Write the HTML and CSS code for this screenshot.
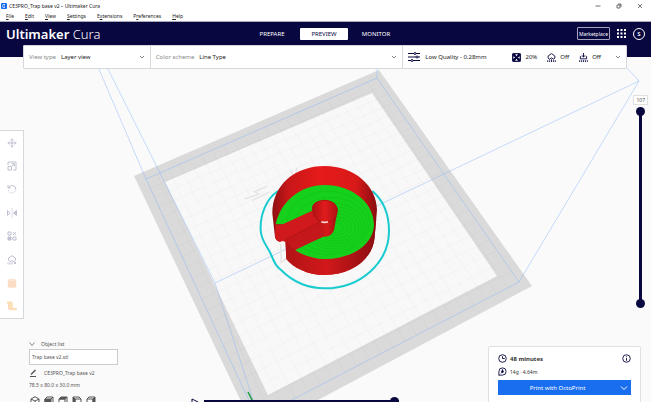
FILE: index.html
```html
<!DOCTYPE html>
<html lang="en">
<head>
<meta charset="utf-8">
<title>CE3PRO_Trap base v2 – Ultimaker Cura</title>
<link rel="stylesheet" href="styles.css">
</head>
<body>
<div class="titlebar">
  <svg class="app-icon" viewBox="0 0 12 12"><rect width="12" height="12" rx="2" fill="#196ef0"/><path d="M8 3H5Q3.500 3 3.500 4.500V7.500Q3.500 9 5 9H8M6 6h2" fill="none" stroke="#fff" stroke-width="1.500"/></svg>
  <span class="window-title">CE3PRO_Trap base v2 – Ultimaker Cura</span>
  <div class="window-controls">
    <button aria-label="Minimize"><svg viewBox="0 0 6 6"><path d="M.5 3h5"/></svg></button>
    <button aria-label="Restore"><svg viewBox="0 0 6 6"><path d="M1 2h3v3H1zM2 1h3v3"/></svg></button>
    <button aria-label="Close"><svg viewBox="0 0 6 6"><path d="M1 1l4 4M5 1L1 5"/></svg></button>
  </div>
</div>
<nav class="menubar">
  <button><u>F</u>ile</button><button><u>E</u>dit</button><button><u>V</u>iew</button><button><u>S</u>ettings</button><button>E<u>x</u>tensions</button><button>P<u>r</u>eferences</button><button><u>H</u>elp</button>
</nav>
<header class="header">
  <div class="logo"><b>Ultimaker</b> Cura</div>
  <nav class="stages">
    <button>PREPARE</button><button class="active">PREVIEW</button><button>MONITOR</button>
  </nav>
  <div class="account">
    <button class="marketplace">Marketplace</button>
    <button aria-label="Applications"><svg class="apps" viewBox="0 0 9 9"><path d="M0 0h2v2H0zM3.500 0h2v2h-2zM7 0h2v2H7zM0 3.500h2v2H0zM3.500 3.500h2v2h-2zM7 3.500h2v2H7zM0 7h2v2H0zM3.500 7h2v2h-2zM7 7h2v2H7z" fill="#fff"/></svg></button>
    <button class="avatar">S</button>
  </div>
</header>
<main class="stage">
  <svg class="scene" viewBox="0 0 651 345" preserveAspectRatio="xMidYMin slice" aria-hidden="true">
    <defs>
      <linearGradient id="wall" x1="0" x2="1"><stop offset="0" stop-color="#8e0f12"/><stop offset=".15" stop-color="#c81719"/><stop offset=".45" stop-color="#e61a1a"/><stop offset=".8" stop-color="#d91919"/><stop offset="1" stop-color="#870d10"/></linearGradient>
      <linearGradient id="front" x1="0" x2="1"><stop offset="0" stop-color="#b11316"/><stop offset=".45" stop-color="#d2181a"/><stop offset="1" stop-color="#8b0e11"/></linearGradient>
      <linearGradient id="post" x1="0" x2="1"><stop offset="0" stop-color="#a91114"/><stop offset=".6" stop-color="#d5191a"/><stop offset="1" stop-color="#9e1013"/></linearGradient>
      <linearGradient id="bore" x1="0" x2="1"><stop offset="0" stop-color="#b01215"/><stop offset=".5" stop-color="#e01b1b"/><stop offset="1" stop-color="#b01215"/></linearGradient>
      <clipPath id="floor"><path id="floor-shape" d="M107 208C122 140 180 90 254 90C335 90 403 142 402 212C398 268 338 312 254 312C220 312 187 300 165 285L250 240L215 168L130 208Z"/></clipPath>
    </defs>
    <g transform="translate(0 -57)">
      <path d="M134 176L379 70L532 286L256 433Z" fill="#dadada"/>
      <path d="M165 182L372 93L497 276L268 395Z" fill="#f8f8f8"/>
      <path id="grid" fill="none" stroke="#000" stroke-opacity=".035" stroke-width=".7"/>
      <g fill="none" stroke="#8db8f8" stroke-opacity=".7" stroke-width=".7">
        <path d="M98 67L146 179L377 78V67M377 78L519 282L257 418L146 179M107 67L165 183L215 283L257 412M215 283L639 81L519 282M639 81L626 67"/>
      </g>
      <path d="M248 392l5 10" stroke="#1c9b43" stroke-width="1.500"/>
      <g transform="translate(240 155) scale(.3333)">
        <path d="M14 132l42-14-12-8 38-16M38 136l50-24M152 46l10 18M170 38l-2 22M122 268l2 54 16-12" fill="none" stroke="#e6e6e6" stroke-width="5"/>
        <path d="M114 108C78 132 60 180 62 225C64 258 78 268 90 292C104 322 104 330 124 346C160 382 205 400 254 400C365 400 447 320 447 228C447 180 430 136 397 108" fill="none" stroke="#17cbcf" stroke-width="6"/>
        <path d="M97 175C97 90 165 33 254 33C345 33 411 95 411 165L404 245C400 312 335 360 254 360C202 360 158 337 139 312L136 260Q128 256 120 260Q108 258 105 246Z" fill="url(#wall)"/>
        <path d="M137 252L165 285C187 300 220 312 254 312C338 312 398 268 402 212L409 190L404 245C400 312 335 360 254 360C202 360 158 337 139 312Z" fill="url(#front)"/>
        <use href="#floor-shape" fill="#16d11b"/>
        <g clip-path="url(#floor)" fill="none" stroke="#12bd19" stroke-width="1.500">
          <ellipse cx="290" cy="218" rx="20" ry="15"/><ellipse cx="290" cy="218" rx="32" ry="23"/><ellipse cx="290" cy="218" rx="44" ry="32"/><ellipse cx="290" cy="217" rx="56" ry="41"/><ellipse cx="288" cy="216" rx="68" ry="50"/><ellipse cx="285" cy="215" rx="80" ry="59"/><ellipse cx="280" cy="213" rx="93" ry="69"/><ellipse cx="273" cy="209" rx="108" ry="82"/><ellipse cx="265" cy="204" rx="124" ry="95"/>
        </g>
        <path d="M107 208Q116 212 132 206L218 168L242 202L262 236L245 246L165 284L137 254L139 262Q128 256 120 260Q108 258 105 246Z" fill="#cf191c"/>
        <path d="M137 254L236 203L256 204L256 242L165 284Q148 276 137 254Z" fill="#c3171b"/>
        <path d="M137 254L236 203" stroke="#a51115" stroke-width="2"/>
        <path d="M216 160C216 147 232 135 254 135S293 148 293 166L282 226Q272 249 248 244L244 203Q226 198 216 160Z" fill="url(#post)"/>
        <path d="M217 162C217 147 234 136 254 136S292 149 292 166C292 184 280 201 254 202C234 202 219 184 217 162Z" fill="url(#bore)" stroke="#a31114" stroke-width="2"/>
        <path d="M244 200q10 4 20 0" fill="none" stroke="#ffdada" stroke-width="5"/>
      </g>
    </g>
  </svg>

  <section class="config">
    <button class="section"><span class="muted">View type</span><span>Layer view</span><svg class="chevron" viewBox="0 0 6 6"><path d="M1 2l2 2 2-2"/></svg></button>
    <button class="section"><span class="muted">Color scheme</span><span>Line Type</span><svg class="chevron" viewBox="0 0 6 6"><path d="M1 2l2 2 2-2"/></svg></button>
    <button class="section settings">
      <svg class="icon wide" viewBox="0 0 12 10"><path d="M0 1.500h6M8 1.500h4M0 5h8M10 5h2M0 8.500h3M5 8.500h7"/><circle cx="7" cy="1.500" r="1"/><circle cx="9" cy="5" r="1"/><circle cx="4" cy="8.500" r="1"/></svg>
      <span class="profile">Low Quality - 0.28mm</span>
      <span class="setting"><svg class="icon" viewBox="0 0 10 10"><rect x=".5" y=".5" width="9" height="9" rx="1" fill="#08073f"/><path d="M3.500 1.500h3L5 3.500zM3.500 8.500h3L5 6.500zM1.500 3.500v3L3.500 5zM8.500 3.500v3L6.500 5z" fill="#fff" stroke="none"/></svg>20%</span>
      <span class="setting"><svg class="icon" viewBox="0 0 10 10"><path d="M2.500 7L1.300 5.500V3.300L5 .6l3.700 2.700v2.200L7.500 7M2.500 7Q5 3.800 7.500 7M.8 8v2M2.900 8v2M5 7v3M7.100 8v2M9.200 8v2"/></svg>Off</span>
      <span class="setting"><svg class="icon" viewBox="0 0 10 10"><path d="M5 0v4.500M3 2.500l2 2 2-2M2.500 4H1.500v2.500h7V4h-1M.8 8v2M2.900 8v2M5 8v2M7.100 8v2M9.200 8v2"/></svg>Off</span>
      <svg class="chevron" viewBox="0 0 6 6"><path d="M1 2l2 2 2-2"/></svg>
    </button>
  </section>

  <div class="workspace">
    <div class="toolbar">
      <button aria-label="Move"><svg viewBox="0 0 10 10"><path d="M5 1v8M1 5h8M3.500 2.300L5 .8l1.500 1.500M3.500 7.700L5 9.200l1.500-1.500M2.300 3.500L.8 5l1.500 1.500M7.700 3.500L9.200 5 7.700 6.500"/></svg></button>
      <button aria-label="Scale"><svg viewBox="0 0 10 10"><path d="M1 4V1h8v8H6M1 5.500h3.500V9H1zM4.500 5.500L7 3M4.500 2.700H7.300V5.500"/></svg></button>
      <button aria-label="Rotate"><svg viewBox="0 0 10 10"><path d="M1 1v3h3M1.300 4Q3 1.200 5.500 1.500Q8.800 2 8.800 5.200"/><path d="M8.800 5.200Q8 9 5 9T1.300 6" stroke-dasharray="1 1"/></svg></button>
      <button aria-label="Mirror"><svg viewBox="0 0 10 10"><path d="M.5 2.500v5L3 5z"/><path d="M9.500 2.500v5L6.500 5z" fill="#c0c0d0"/><path d="M5 .5v9" stroke-dasharray="1 1"/></svg></button>
      <button aria-label="Per model settings"><svg viewBox="0 0 10 10"><path d="M1 1h3v3H1zM6 1l3 3M9 1L6 4M6 6h3v3H6z"/><path d="M1 6h3v3H1z" fill="#c0c0d0"/></svg></button>
      <button aria-label="Support blocker"><svg viewBox="0 0 10 10"><path d="M3 6.700L1.500 5V3L5 .7 8.500 3v2L7 6.700Q5 4.500 3 6.700M1 7.500v2M3 7.500v2M5 7v2.500M7 7l2 2M9 7L7 9"/></svg></button>
      <button aria-label="Cylinder shape"><svg viewBox="0 0 10 12"><path d="M0 2q5-2 10 0v9q-5 1.500-10 0z" fill="#fbdcc5" stroke="none"/><path d="M0 2q5 1.500 10 0" stroke="#fdeee3"/></svg></button>
      <button aria-label="Custom shape"><svg viewBox="0 0 12 12"><path d="M0 1l4-1 3 2v6l5 1-1 2H5L2 10V4L0 3z" fill="#fbe2ba" stroke="none"/><path d="M2 2.500v7l3 1M8 8.500l4 1.500" stroke="#fbd0b0"/></svg></button>
    </div>
    <div class="layers">
      <output class="layer-number">107</output>
      <div class="layer-range">
        <input type="range" aria-label="Lower layer" min="0" max="107" value="0">
        <input type="range" aria-label="Upper layer" class="upper" min="0" max="107" value="107">
      </div>
    </div>
  </div>

  <div class="bottom">
    <section class="objects">
      <button class="object-toggle"><svg class="chevron" viewBox="0 0 6 6"><path d="M.5 1.500L3 4.500l2.500-3"/></svg>Object list</button>
      <ul class="object-list"><li>Trap base v2.stl</li></ul>
      <button class="job-name"><svg viewBox="0 0 8 8"><path d="M2 5.500L6.500 1" stroke-width="1.500"/><path d="M1 7.500h6"/></svg>CE3PRO_Trap base v2</button>
      <p class="dimensions">78.5 x 80.0 x 30.0 mm</p>
      <div class="views">
        <button aria-label="3D view"><svg viewBox="0 0 10 10"><path d="M5 .7L9 3v4.500L5 9.500 1 7.500V3zM1 3l4 2 4-2M5 5v4.500"/></svg></button>
        <button aria-label="Front view"><svg viewBox="0 0 10 10"><path d="M1 3l2-2h6v6L7 9H1zM7 3l2-2"/><path d="M1 3h6v6H1z" fill="#555"/></svg></button>
        <button aria-label="Top view"><svg viewBox="0 0 10 10"><path d="M1 3h6v6H1zM7 9l2-2V1"/><path d="M1 3l2-2h6L7 3z" fill="#555"/></svg></button>
        <button aria-label="Left view"><svg viewBox="0 0 10 10"><path d="M3 3h6v6H3z"/><path d="M1 1l2 2v6L1 7z" fill="#555"/><path d="M1 1h6l2 2"/></svg></button>
        <button aria-label="Right view"><svg viewBox="0 0 10 10"><path d="M1 3h6v6H1zM1 3l2-2h6"/><path d="M7 3l2-2v6L7 9z" fill="#555"/></svg></button>
      </div>
    </section>
    <div class="simulation">
      <button aria-label="Play"><svg viewBox="0 0 8 8"><path d="M1 1v6l6-3z"/></svg></button>
      <input type="range" aria-label="Path position" min="0" max="100" value="100">
    </div>
    <section class="print">
      <div class="print-row"><svg class="icon" viewBox="0 0 10 10"><circle cx="5" cy="5" r="4.200"/><path d="M5 2.500V5h2.500"/></svg><strong>48 minutes</strong>
        <button class="info" aria-label="Print information"><svg class="icon" viewBox="0 0 10 10"><circle cx="5" cy="5" r="4.200"/><path d="M5 4.500v3M5 2.500v1"/></svg></button></div>
      <div class="print-row"><svg class="icon" viewBox="0 0 10 10"><path d="M1 9.500V5a4 4 0 1 1 4 4H1"/><circle cx="5" cy="5" r="1" fill="#08073f"/><path d="M5 5V2.500M5 5L3.500 7"/></svg><span>14g · 4.64m</span></div>
      <div class="print-action"><button>Print with OctoPrint</button><button aria-label="More outputs"><svg viewBox="0 0 8 6"><path d="M1 1.500l3 3 3-3"/></svg></button></div>
    </section>
  </div>
</main>
<script src="grid.js"></script>
</body>
</html>
```
FILE: styles.css
```css
* { box-sizing: border-box; }
body {
  margin: 0;
  height: 100vh;
  display: flex;
  flex-direction: column;
  overflow: hidden;
  background: #fafafa;
  color: #222;
  font: 6px/8px "Noto Sans", sans-serif;
}
button {
  margin: 0;
  padding: 0;
  border: 0;
  background: none;
  color: inherit;
  font: inherit;
  white-space: nowrap;
}
svg { display: block; flex: none; }

.titlebar { display: flex; align-items: center; height: 11px; padding-left: 1px; background: #fff; font-size: 5px; }
.app-icon { width: 6px; height: 6px; margin-right: 2px; }
.window-controls { display: flex; gap: 15px; margin-left: auto; padding-right: 8px; }
.window-controls svg { width: 6px; height: 6px; fill: none; stroke: #333; stroke-width: .7; }
.menubar { display: flex; gap: 11px; height: 11px; padding-left: 6px; background: #fff; border-bottom: 1px solid #aaaabc; font-size: 5px; }

.header {
  display: grid;
  grid-template-columns: 1fr auto 1fr;
  align-items: center;
  height: 35px;
  padding: 0 6px 12px;
  background: #08073f;
  color: #fff;
}
.logo { font: 300 13px/16px "Noto Sans", "Open Sans", sans-serif; }
.logo b { font-weight: 600; }
.stages { display: flex; gap: 4px; padding-right: 3px; }
.stages button { width: 48px; height: 12px; border-radius: 1px; }
.stages .active { background: #fff; color: #08073f; }
.account { display: flex; justify-content: flex-end; align-items: center; gap: 7px; }
.marketplace { height: 13px; padding: 0 1px; border: 1px solid #a5a5bd; border-radius: 1px; font-size: 5px; }
.apps { width: 9px; height: 9px; }
.avatar { width: 12px; height: 12px; border: 1px solid #fff; border-radius: 50%; font-weight: 600; line-height: 8px; }

.stage { position: relative; flex: 1; min-height: 0; display: flex; flex-direction: column; }
.scene { position: absolute; inset: 0; width: 100%; height: 100%; }
.config, .workspace, .bottom { position: relative; }
.config {
  display: grid;
  grid-template-columns: 126fr 253fr 224fr;
  height: 24px;
  margin: -12px 24px 0 23px;
  background: #fff;
  border: 1px solid #d8d8dc;
  border-radius: 1px;
}
.section { display: flex; align-items: center; gap: 5px; padding: 0 5px; text-align: left; }
.section + .section { border-left: 1px solid #d8d8dc; }
.muted { color: #888; }
.chevron { width: 6px; height: 6px; margin-left: auto; fill: none; stroke: #555; stroke-width: .7; }
.icon { width: 9px; height: 9px; fill: none; stroke: #08073f; stroke-width: 1; }
.wide { width: 12px; height: 10px; }
.profile { margin-right: auto; }
.setting { display: flex; align-items: center; gap: 4px; margin-right: 5px; }
.settings .chevron { margin-left: 4px; }

.workspace { flex: 1; display: flex; justify-content: space-between; align-items: flex-start; padding-right: 3px; }
.toolbar {
  display: grid;
  grid-auto-rows: 1fr;
  width: 24px;
  height: 47vh;
  margin-top: 61px;
  background: #fff;
  border: 1px solid #d8d8dc;
  border-left: 0;
  border-radius: 0 1px 1px 0;
}
.toolbar button { display: grid; place-items: center; }
.toolbar svg { width: 10px; height: 10px; fill: none; stroke: #c0c0d0; stroke-width: 1; }
.layers { display: flex; flex-direction: column; align-items: center; gap: 2px; margin-top: 26px; }
.layer-number { padding: 0 2px; border: 1px solid #e0e0e0; background: #fff; color: #555; font-size: 5px; }
.layer-range { display: grid; }
input[type="range"] { appearance: none; margin: 0; background: none; }
input[type="range"]::-webkit-slider-thumb {
  appearance: none;
  width: 9px;
  height: 9px;
  border-radius: 50%;
  background: #08073f;
}
.layer-range input {
  grid-area: 1 / 1;
  writing-mode: vertical-lr;
  direction: rtl;
  width: 9px;
  height: 50vh;
  background: linear-gradient(#08073f, #08073f) center / 3px 96% no-repeat;
}
.layer-range .upper { background: none; }

.bottom { display: flex; align-items: flex-start; height: 62px; padding: 0 10px 0 29px; }
.objects { width: 89px; font-size: 5px; color: #555; }
.objects button { display: flex; align-items: center; }
.objects svg { fill: none; stroke: #555; }
.object-toggle { gap: 6px; }
.object-toggle .chevron { margin: 0; }
.object-list { margin: 1px 0 4px; padding: 3px 2px; border: 1px solid #ccc; background: #fff; list-style: none; }
.job-name { gap: 7px; }
.job-name svg { width: 8px; height: 8px; }
.dimensions { margin: 4px 0 7px; }
.views { display: flex; gap: 4px; padding-left: 1px; }
.views svg { width: 10px; height: 10px; }
.simulation { display: flex; align-items: center; gap: 5px; flex: 1; margin: 57px 89px 0 73px; }
.simulation svg { width: 8px; height: 8px; fill: #fff; stroke: #08073f; }
.simulation input {
  flex: 1;
  min-width: 0;
  height: 9px;
  background: linear-gradient(#08073f, #08073f) center / 100% 3px no-repeat;
}
.print {
  width: 153px;
  margin-top: 6px;
  padding: 7px 9px;
  border: 1px solid #e0e0e0;
  border-radius: 2px;
  background: #fff;
  color: #333;
  font-size: 5px;
}
.print-row { display: flex; align-items: center; gap: 3px; height: 9px; margin-bottom: 4px; }
.print-row strong { font-size: 6px; font-weight: 700; }
.info { margin-left: auto; }
.print-action { display: flex; height: 15px; background: #196ef0; color: #fff; font-size: 6px; }
.print-action button:first-child { flex: 1; }
.print-action svg { width: 8px; height: 6px; margin: 0 3px; fill: none; stroke: #fff; stroke-width: 1; }
```
FILE: grid.js
```js
// Build plate corners: back-left, back-right, front-right, front-left.
const [a, b, c, d] = [[146, 179], [377, 78], [519, 282], [257, 418]];
const cells = 22;

// Perspective mapping of the unit square onto the plate.
const dx1 = b[0] - c[0], dx2 = d[0] - c[0], sx = a[0] - b[0] + c[0] - d[0];
const dy1 = b[1] - c[1], dy2 = d[1] - c[1], sy = a[1] - b[1] + c[1] - d[1];
const det = dx1 * dy2 - dx2 * dy1;
const g = (sx * dy2 - dx2 * sy) / det;
const h = (dx1 * sy - sx * dy1) / det;
function project(u, v) {
  const w = g * u + h * v + 1;
  return [0, 1].map(i =>
    ((b[i] - a[i] + g * b[i]) * u + (d[i] - a[i] + h * d[i]) * v + a[i]) / w);
}

let path = "";
for (let i = 1; i < cells; i++) {
  const t = i / cells;
  path += `M${project(t, 0)}L${project(t, 1)}M${project(0, t)}L${project(1, t)}`;
}
document.getElementById("grid").setAttribute("d", path);
```
